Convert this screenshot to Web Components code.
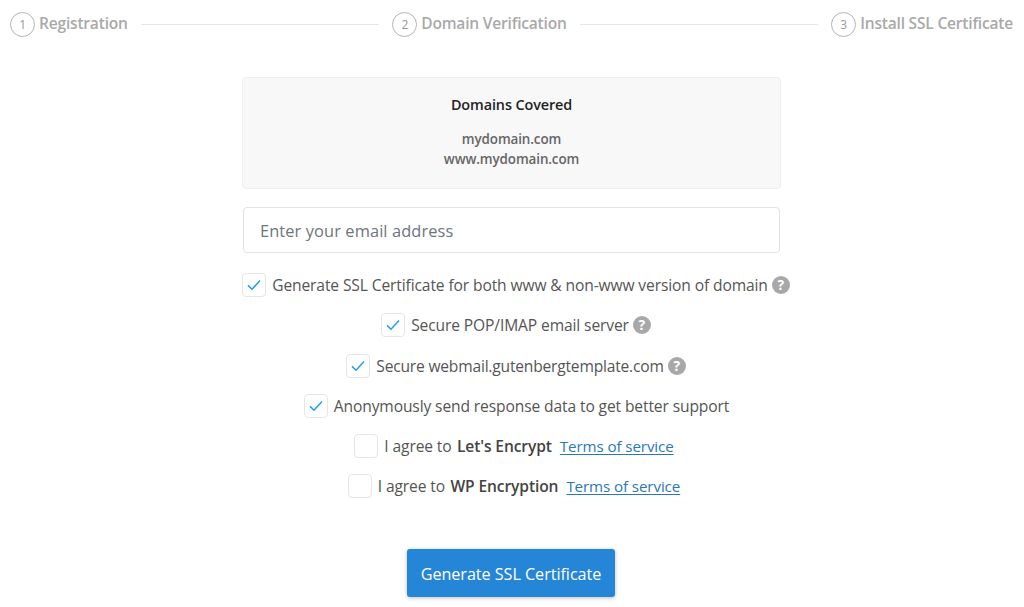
<!DOCTYPE html>
<html>
<head>
<meta charset="utf-8">
<title>Generate SSL Certificate</title>
<style>
  html, body { margin: 0; padding: 0; background: #fff; }
  body { font-family: "Open Sans", "Noto Sans", sans-serif; width: 1024px; height: 607px; overflow: hidden; }
</style>
</head>
<body>
<ssl-app>
  <ssl-stepper>
    <ssl-step number="1">Registration</ssl-step>
    <ssl-step number="2">Domain Verification</ssl-step>
    <ssl-step number="3">Install SSL Certificate</ssl-step>
  </ssl-stepper>
  <ssl-domains heading="Domains Covered">
    <div>mydomain.com</div>
    <div>www.mydomain.com</div>
  </ssl-domains>
  <ssl-email>Enter your email address</ssl-email>
  <ssl-options>
    <ssl-check checked help shift="8">Generate SSL Certificate for both www &amp; non-www version of domain</ssl-check>
    <ssl-check checked help shift="8">Secure POP/IMAP email server</ssl-check>
    <ssl-check checked help shift="8" tight>Secure webmail.gutenbergtemplate.com</ssl-check>
    <ssl-check checked shift="9">Anonymously send response data to get better support</ssl-check>
    <ssl-check shift="4">I agree to <ssl-strong>Let's Encrypt</ssl-strong><ssl-terms>Terms of service</ssl-terms></ssl-check>
    <ssl-check shift="4">I agree to <ssl-strong>WP Encryption</ssl-strong><ssl-terms>Terms of service</ssl-terms></ssl-check>
  </ssl-options>
  <ssl-button>Generate SSL Certificate</ssl-button>
</ssl-app>

<script>
(function() {
  const FONT = '"Open Sans", "Noto Sans", sans-serif';

  // every element is the same: a shadow root filled from a string
  class Base extends HTMLElement {
    constructor() {
      super();
      this._root = this.attachShadow({mode: 'open'});
    }
    connectedCallback() {
      this._root.innerHTML = this.render();
    }
  }

  class SslApp extends Base {
    render() {
      return `<style>
        :host { display: flex; flex-direction: column; align-items: center; font-family: ${FONT}; }
      </style><slot></slot>`;
    }
  }

  class SslStepper extends Base {
    render() {
      return `<style>
        :host { display: flex; align-items: center; align-self: stretch; height: 25px; margin-top: 12px; padding: 0 11px 0 10px; }
      </style><slot></slot>`;
    }
  }

  class SslStep extends Base {
    render() {
      const n = this.getAttribute('number');
      const line = n === '3' ? '' : '<span class="line"></span>';
      return `<style>
        :host { display: flex; align-items: center; color: #a9a9a9; font-size: 15.55px; font-weight: 600; letter-spacing: -0.2px; white-space: nowrap; }
        :host([number="1"]), :host([number="2"]) { flex: 1 1 auto; }
        .num { box-sizing: border-box; width: 25px; height: 25px; border: 1.5px solid #b4b4b4; border-radius: 50%; display: flex; align-items: center; justify-content: center; font-size: 12px; font-weight: 400; color: #999; margin-right: 4px; }
        .label { position: relative; top: -2px; }
        .line { flex: 1; height: 1px; background: #e6e6e6; margin: 0 13px; }
      </style><span class="num">${n}</span><span class="label"><slot></slot></span>${line}`;
    }
  }

  class SslDomains extends Base {
    render() {
      return `<style>
        :host { display: block; box-sizing: border-box; width: 539px; height: 112px; margin-top: 40px; margin-right: 1px; background: #f8f8f8; border: 1px solid #eeeeee; border-radius: 4px; text-align: center; }
        h4 { margin: 17px 0 14px; font-size: 14.4px; line-height: 20px; font-weight: 600; color: #222; letter-spacing: -0.1px; }
        .list { font-size: 13.4px; line-height: 20px; font-weight: 600; color: #666; letter-spacing: -0.1px; }
      </style><h4>${this.getAttribute('heading')}</h4><div class="list"><slot></slot></div>`;
    }
  }

  class SslEmail extends Base {
    render() {
      return `<style>
        :host { display: flex; align-items: center; box-sizing: border-box; width: 537px; height: 46px; margin-top: 18px; margin-right: 1px; padding: 1px 0 0 16px; background: #fff; border: 1px solid #e2e2e2; border-radius: 4px; font-size: 16.4px; color: #6c757d; letter-spacing: 0.1px; }
      </style><slot></slot>`;
    }
  }

  class SslOptions extends Base {
    render() {
      return `<style>
        :host { display: flex; flex-direction: column; align-self: stretch; margin-top: 20px; gap: 16.3px; }
      </style><slot></slot>`;
    }
  }

  class SslCheck extends Base {
    render() {
      const tick = this.hasAttribute('checked')
        ? '<svg width="14" height="12" viewBox="0 0 14 12"><path d="M1 6.4 L5 10.2 L13 1.6" fill="none" stroke="#1e9ff2" stroke-width="1.5"/></svg>'
        : '';
      const help = this.hasAttribute('help') ? '<ssl-help></ssl-help>' : '';
      const shift = +this.getAttribute('shift') || 0;
      return `<style>
        :host { display: flex; justify-content: center; align-items: center; height: 24px; padding-left: ${shift}px; font-size: 15.6px; color: #555; white-space: pre; letter-spacing: -0.12px; }
        :host([tight]) { letter-spacing: -0.2px; }
        .box { box-sizing: border-box; width: 24px; height: 24px; margin-right: 6px; border: 1px solid #e6e6e6; border-radius: 4px; background: #fff; display: flex; align-items: center; justify-content: center; }
      </style><span class="box">${tick}</span><slot></slot>${help}`;
    }
  }

  class SslHelp extends Base {
    render() {
      return `<style>
        :host { display: inline-flex; align-items: center; justify-content: center; width: 18px; height: 18px; margin-left: 4px; border-radius: 50%; background: #a8a8a8; color: #fff; font-size: 14px; font-weight: 700; line-height: 1; }
      </style>?`;
    }
  }

  class SslStrong extends Base {
    render() {
      return `<style>
        :host { display: inline; margin-left: 1.5px; font-weight: 600; color: #444; }
      </style><slot></slot>`;
    }
  }

  class SslTerms extends Base {
    render() {
      return `<style>
        :host { display: inline; margin-left: 8px; color: #2b78b8; font-size: 15.2px; text-decoration: underline; text-underline-offset: 2px; }
      </style><slot></slot>`;
    }
  }

  class SslButton extends Base {
    render() {
      return `<style>
        :host { display: flex; align-items: center; justify-content: center; box-sizing: border-box; width: 208px; height: 48px; margin-top: 51px; margin-right: 2px; padding-top: 1px; background: #2585d6; border-radius: 3px; box-shadow: 0 1px 4px rgba(0,0,0,.25); color: #fff; font-size: 16.2px; letter-spacing: -0.05px; }
      </style><slot></slot>`;
    }
  }

  customElements.define('ssl-app', SslApp);
  customElements.define('ssl-stepper', SslStepper);
  customElements.define('ssl-step', SslStep);
  customElements.define('ssl-domains', SslDomains);
  customElements.define('ssl-email', SslEmail);
  customElements.define('ssl-options', SslOptions);
  customElements.define('ssl-check', SslCheck);
  customElements.define('ssl-help', SslHelp);
  customElements.define('ssl-strong', SslStrong);
  customElements.define('ssl-terms', SslTerms);
  customElements.define('ssl-button', SslButton);
}());
</script>
</body>
</html>
